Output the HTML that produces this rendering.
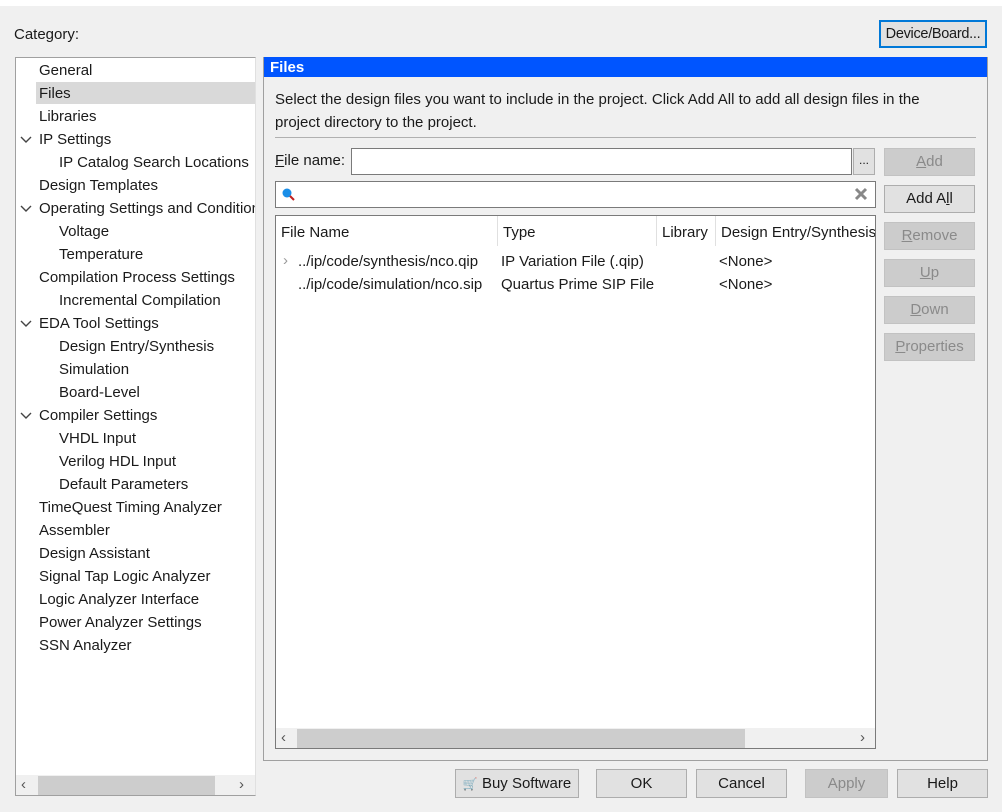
<!DOCTYPE html>
<html><head><meta charset="utf-8"><style>
*{box-sizing:border-box;margin:0;padding:0}
body{width:1002px;height:812px;background:#f0f0f0;font-family:"Liberation Sans",sans-serif;font-size:15px;color:#1a1a1a;position:relative;overflow:hidden}
.a{position:absolute;white-space:nowrap}
.btn{position:absolute;background:#e1e1e1;border:1px solid #adadad;text-align:center;line-height:25px}
.dis{background:#cccccc;border-color:#c2c2c2;color:#8a8a8a}
.tr{position:absolute;height:23px;line-height:23px;white-space:nowrap}
.chev{position:absolute;left:19px;top:5px;width:12px;height:12px}
u{text-decoration:underline}
</style></head><body>
<div class="a" style="left:0;top:0;width:1002px;height:6px;background:#fff"></div>
<div class="a" style="left:14px;top:26px">Category:</div>
<div class="btn" style="left:879px;top:20px;width:108px;height:28px;border:2px solid #0078d7;line-height:24px;font-size:14.5px;letter-spacing:-0.3px">Device/Board...</div>

<!-- left tree -->
<div class="a" style="left:15px;top:57px;width:241px;height:739px;background:#fff;border:1px solid #a0a0a0;border-right-color:#e0e0e0;overflow:hidden">
<div class="a" style="left:20px;top:24px;width:219px;height:22px;background:#d9d9d9"></div>
<div class="tr" style="left:23px;top:1px">General</div>
<div class="tr" style="left:23px;top:24px">Files</div>
<div class="tr" style="left:23px;top:47px">Libraries</div>
<svg class="chev" style="top:76px;left:4px" viewBox="0 0 12 12"><path d="M1 3l5 5 5-5" fill="none" stroke="#444" stroke-width="1.4"/></svg>
<div class="tr" style="left:23px;top:70px">IP Settings</div>
<div class="tr" style="left:43px;top:93px">IP Catalog Search Locations</div>
<div class="tr" style="left:23px;top:116px">Design Templates</div>
<svg class="chev" style="top:145px;left:4px" viewBox="0 0 12 12"><path d="M1 3l5 5 5-5" fill="none" stroke="#444" stroke-width="1.4"/></svg>
<div class="tr" style="left:23px;top:139px">Operating Settings and Conditions</div>
<div class="tr" style="left:43px;top:162px">Voltage</div>
<div class="tr" style="left:43px;top:185px">Temperature</div>
<div class="tr" style="left:23px;top:208px">Compilation Process Settings</div>
<div class="tr" style="left:43px;top:231px">Incremental Compilation</div>
<svg class="chev" style="top:260px;left:4px" viewBox="0 0 12 12"><path d="M1 3l5 5 5-5" fill="none" stroke="#444" stroke-width="1.4"/></svg>
<div class="tr" style="left:23px;top:254px">EDA Tool Settings</div>
<div class="tr" style="left:43px;top:277px">Design Entry/Synthesis</div>
<div class="tr" style="left:43px;top:300px">Simulation</div>
<div class="tr" style="left:43px;top:323px">Board-Level</div>
<svg class="chev" style="top:352px;left:4px" viewBox="0 0 12 12"><path d="M1 3l5 5 5-5" fill="none" stroke="#444" stroke-width="1.4"/></svg>
<div class="tr" style="left:23px;top:346px">Compiler Settings</div>
<div class="tr" style="left:43px;top:369px">VHDL Input</div>
<div class="tr" style="left:43px;top:392px">Verilog HDL Input</div>
<div class="tr" style="left:43px;top:415px">Default Parameters</div>
<div class="tr" style="left:23px;top:438px">TimeQuest Timing Analyzer</div>
<div class="tr" style="left:23px;top:461px">Assembler</div>
<div class="tr" style="left:23px;top:484px">Design Assistant</div>
<div class="tr" style="left:23px;top:507px">Signal Tap Logic Analyzer</div>
<div class="tr" style="left:23px;top:530px">Logic Analyzer Interface</div>
<div class="tr" style="left:23px;top:553px">Power Analyzer Settings</div>
<div class="tr" style="left:23px;top:576px">SSN Analyzer</div>
<div class="a" style="left:0;top:717px;width:239px;height:20px;background:#f0f0f0"></div>
<div class="a" style="left:22px;top:718px;width:177px;height:19px;background:#cdcdcd"></div>
<div class="a" style="left:5px;top:718px;color:#555">‹</div>
<div class="a" style="left:223px;top:718px;color:#555">›</div>
</div>

<!-- right group -->
<div class="a" style="left:263px;top:57px;width:725px;height:704px;border:1px solid #a0a0a0"></div>
<div class="a" style="left:264px;top:57px;width:723px;height:20px;background:#0055ff;color:#fff;font-weight:bold;padding-left:6px;line-height:21px">Files</div>
<div class="a" style="left:275px;top:88px;line-height:23px;white-space:normal;width:685px">Select the design files you want to include in the project. Click Add All to add all design files in the project directory to the project.</div>
<div class="a" style="left:275px;top:137px;width:701px;height:1px;background:#b0b0b0"></div>
<div class="a" style="left:275px;top:152px"><u>F</u>ile name:</div>
<div class="a" style="left:351px;top:148px;width:501px;height:27px;background:#fff;border:1px solid #7a7a7a"></div>
<div class="btn" style="left:853px;top:148px;width:22px;height:27px;font-size:12px;line-height:22px">...</div>
<div class="a" style="left:275px;top:181px;width:601px;height:27px;background:#fff;border:1px solid #7a7a7a"></div>
<svg class="a" style="left:281px;top:187px" width="16" height="16" viewBox="0 0 16 16"><circle cx="6" cy="6" r="4.5" fill="#1a8ee8"/><path d="M9 9l4 4" stroke="#c02020" stroke-width="2"/></svg>
<svg class="a" style="left:854px;top:187px" width="14" height="14" viewBox="0 0 14 14"><path d="M2 2l10 10M12 2L2 12" stroke="#888" stroke-width="3"/></svg>

<div class="a" style="left:275px;top:215px;width:601px;height:534px;background:#fff;border:1px solid #7a7a7a;overflow:hidden">
<div class="a" style="left:221px;top:0;width:1px;height:30px;background:#e0e0e0"></div>
<div class="a" style="left:380px;top:0;width:1px;height:30px;background:#e0e0e0"></div>
<div class="a" style="left:439px;top:0;width:1px;height:30px;background:#e0e0e0"></div>
<div class="a" style="left:5px;top:8px">File Name</div>
<div class="a" style="left:227px;top:8px">Type</div>
<div class="a" style="left:386px;top:8px;width:52px;overflow:hidden">Library</div>
<div class="a" style="left:445px;top:8px">Design Entry/Synthesis</div>
<div class="a" style="left:7px;top:36px;color:#999">›</div>
<div class="a" style="left:22px;top:37px">../ip/code/synthesis/nco.qip</div>
<div class="a" style="left:225px;top:37px">IP Variation File (.qip)</div>
<div class="a" style="left:443px;top:37px">&lt;None&gt;</div>
<div class="a" style="left:22px;top:60px">../ip/code/simulation/nco.sip</div>
<div class="a" style="left:225px;top:60px;width:155px;overflow:hidden">Quartus Prime SIP File</div>
<div class="a" style="left:443px;top:60px">&lt;None&gt;</div>
<div class="a" style="left:0;top:512px;width:600px;height:20px;background:#f0f0f0"></div>
<div class="a" style="left:21px;top:513px;width:448px;height:19px;background:#cdcdcd"></div>
<div class="a" style="left:5px;top:513px;color:#555">‹</div>
<div class="a" style="left:584px;top:513px;color:#555">›</div>
</div>

<div class="btn dis" style="left:884px;top:148px;width:91px;height:28px"><u>A</u>dd</div>
<div class="btn" style="left:884px;top:185px;width:91px;height:28px">Add A<u>l</u>l</div>
<div class="btn dis" style="left:884px;top:222px;width:91px;height:28px"><u>R</u>emove</div>
<div class="btn dis" style="left:884px;top:259px;width:91px;height:28px"><u>U</u>p</div>
<div class="btn dis" style="left:884px;top:296px;width:91px;height:28px"><u>D</u>own</div>
<div class="btn dis" style="left:884px;top:333px;width:91px;height:28px"><u>P</u>roperties</div>

<div class="btn" style="left:455px;top:769px;width:124px;height:29px;line-height:27px"><span style="color:#334;font-size:12px">🛒</span> Buy Software</div>
<div class="btn" style="left:596px;top:769px;width:91px;height:29px;line-height:27px">OK</div>
<div class="btn" style="left:696px;top:769px;width:91px;height:29px;line-height:27px">Cancel</div>
<div class="btn dis" style="left:805px;top:769px;width:83px;height:29px;line-height:27px">Apply</div>
<div class="btn" style="left:897px;top:769px;width:91px;height:29px;line-height:27px">Help</div>
</body></html>
